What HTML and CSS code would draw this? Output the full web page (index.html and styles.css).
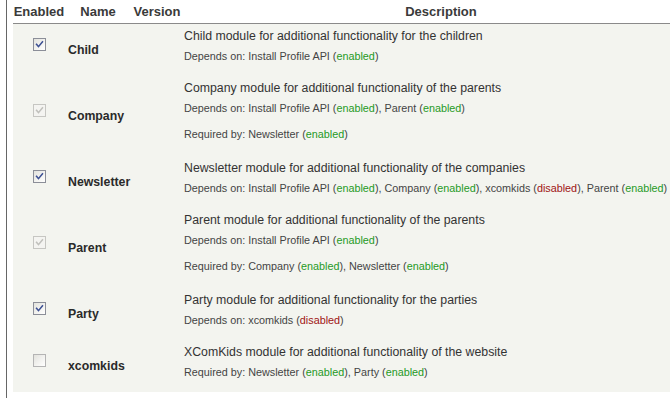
FILE: index.html
```html
<!DOCTYPE html>
<html lang="en">
<head>
    <meta charset="UTF-8">
    <title>Modules</title>
    <link rel="stylesheet" href="styles.css">
</head>
<body>
    <div class="page">
        <table class="modules">
            <colgroup>
                <col class="col-enabled">
                <col class="col-name">
                <col class="col-version">
                <col class="col-desc">
            </colgroup>
            <thead>
                <tr>
                    <th>Enabled</th>
                    <th>Name</th>
                    <th>Version</th>
                    <th>Description</th>
                </tr>
            </thead>
            <tbody>
                <tr>
                    <td class="check"><span class="box checked"><svg viewBox="0 0 13 13"><path d="M3 6.2 L5.3 9 L10 3.3"/></svg></span></td>
                    <td class="name">Child</td>
                    <td></td>
                    <td class="desc">
                        <div class="text">Child module for additional functionality for the children</div>
                        <div class="meta">Depends on: Install Profile API (<span class="on">enabled</span>)</div>
                    </td>
                </tr>
                <tr>
                    <td class="check"><span class="box locked"><svg viewBox="0 0 13 13"><path d="M3 6.2 L5.3 9 L10 3.3"/></svg></span></td>
                    <td class="name">Company</td>
                    <td></td>
                    <td class="desc">
                        <div class="text">Company module for additional functionality of the parents</div>
                        <div class="meta">Depends on: Install Profile API (<span class="on">enabled</span>), Parent (<span class="on">enabled</span>)</div>
                        <div class="meta">Required by: Newsletter (<span class="on">enabled</span>)</div>
                    </td>
                </tr>
                <tr>
                    <td class="check"><span class="box checked"><svg viewBox="0 0 13 13"><path d="M3 6.2 L5.3 9 L10 3.3"/></svg></span></td>
                    <td class="name">Newsletter</td>
                    <td></td>
                    <td class="desc">
                        <div class="text">Newsletter module for additional functionality of the companies</div>
                        <div class="meta">Depends on: Install Profile API (<span class="on">enabled</span>), Company (<span class="on">enabled</span>), xcomkids (<span class="off">disabled</span>), Parent (<span class="on">enabled</span>)</div>
                    </td>
                </tr>
                <tr>
                    <td class="check"><span class="box locked"><svg viewBox="0 0 13 13"><path d="M3 6.2 L5.3 9 L10 3.3"/></svg></span></td>
                    <td class="name">Parent</td>
                    <td></td>
                    <td class="desc">
                        <div class="text">Parent module for additional functionality of the parents</div>
                        <div class="meta">Depends on: Install Profile API (<span class="on">enabled</span>)</div>
                        <div class="meta">Required by: Company (<span class="on">enabled</span>), Newsletter (<span class="on">enabled</span>)</div>
                    </td>
                </tr>
                <tr>
                    <td class="check"><span class="box checked"><svg viewBox="0 0 13 13"><path d="M3 6.2 L5.3 9 L10 3.3"/></svg></span></td>
                    <td class="name">Party</td>
                    <td></td>
                    <td class="desc">
                        <div class="text">Party module for additional functionality for the parties</div>
                        <div class="meta">Depends on: xcomkids (<span class="off">disabled</span>)</div>
                    </td>
                </tr>
                <tr>
                    <td class="check"><span class="box"></span></td>
                    <td class="name">xcomkids</td>
                    <td></td>
                    <td class="desc">
                        <div class="text">XComKids module for additional functionality of the website</div>
                        <div class="meta">Required by: Newsletter (<span class="on">enabled</span>), Party (<span class="on">enabled</span>)</div>
                    </td>
                </tr>
            </tbody>
        </table>
    </div>
</body>
</html>
```

FILE: styles.css
```css
body {
    margin: 0;
    background: #fff;
    font-family: "Liberation Sans", Arial, sans-serif;
    color: #333;
}

.page {
    margin-left: 6px;
    padding-left: 6px;
    border-left: 1px solid #666;
    height: 398px;
    overflow: hidden;
}

.modules {
    border-collapse: collapse;
    table-layout: fixed;
    width: 686px;
}

.col-enabled { width: 52px; }
.col-name { width: 66px; }
.col-version { width: 52px; }
.col-desc { width: 516px; }

.modules th {
    height: 23px;
    padding: 0;
    font-size: 13px;
    font-weight: bold;
    color: #3a3a3a;
    text-align: center;
    vertical-align: middle;
    border-bottom: 1px solid #8a8a8a;
}

.modules td {
    background: #f3f4ef;
    padding: 0;
    vertical-align: middle;
}

/* checkbox */
.check {
    text-align: center;
    padding-bottom: 13px !important;
}

.box {
    display: inline-block;
    width: 11px;
    height: 11px;
    border: 1px solid #b4b4b4;
    background: linear-gradient(135deg, #e2e2dd 0%, #f7f7f5 70%, #fff 100%);
    vertical-align: middle;
}

.box svg {
    display: block;
    width: 11px;
    height: 11px;
    fill: none;
    stroke-width: 1.8;
    stroke-linecap: square;
}

.box.checked {
    border-color: #8b8e98;
}

.box.checked svg {
    stroke: #3b4f93;
}

.box.locked {
    border-color: #c6c6c2;
    background: #f4f4f1;
}

.box.locked svg {
    stroke: #c0c0bc;
}

.name {
    padding-left: 3px !important;
    font-size: 12.3px;
    font-weight: bold;
    color: #2a2a2a;
    white-space: nowrap;
}

.desc {
    padding: 4px 0 2px 1px !important;
}

.desc .text {
    font-size: 12.3px;
    line-height: 16px;
    color: #333;
    white-space: nowrap;
}

.desc .meta {
    margin: 4px 0 10px;
    font-size: 10.8px;
    line-height: 16px;
    color: #444;
    white-space: nowrap;
}

.desc .meta + .meta {
    margin-top: 10px;
    margin-bottom: 12px;
}

.on {
    color: #1f9a1f;
}

.off {
    color: #a01414;
}
```
